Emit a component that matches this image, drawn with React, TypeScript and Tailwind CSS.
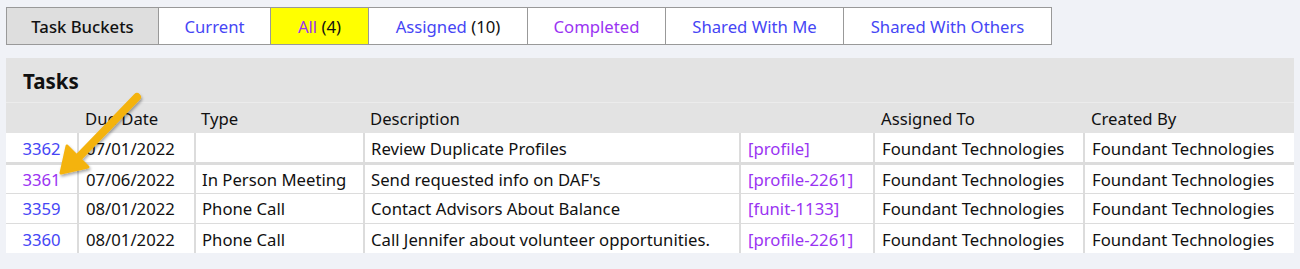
import React from "react";

const font = { fontFamily: '"Noto Sans", "Open Sans", sans-serif' };

const rows = [
  { id: "3362", idColor: "text-[#4646f5]", date: "07/01/2022", type: "", desc: "Review Duplicate Profiles", link: "[profile]" },
  { id: "3361", idColor: "text-[#9a34f2]", date: "07/06/2022", type: "In Person Meeting", desc: "Send requested info on DAF's", link: "[profile-2261]" },
  { id: "3359", idColor: "text-[#4646f5]", date: "08/01/2022", type: "Phone Call", desc: "Contact Advisors About Balance", link: "[funit-1133]" },
  { id: "3360", idColor: "text-[#4646f5]", date: "08/01/2022", type: "Phone Call", desc: "Call Jennifer about volunteer opportunities.", link: "[profile-2261]" },
];

export default function App() {
  return (
    <div className="w-[1300px] h-[269px] bg-[#f0f2f7] relative text-[16.7px] text-[#111]" style={font}>
      <div className="pt-[7px] pl-[6px]">
        <div className="flex h-[38px] w-[1046px] border border-[#999] bg-white">
          <div className="w-[152px] flex items-center justify-center pt-[2px] bg-[#dedede] border-r border-[#999] font-medium text-[#111]">Task Buckets</div>
          <div className="w-[112px] flex items-center justify-center pt-[2px] border-r border-[#999] text-[#4646f5]">Current</div>
          <div className="w-[98px] flex items-center justify-center pt-[2px] border-r border-[#999] bg-[#ffff00]"><span className="text-[#9a34f2]">All</span>&nbsp;(4)</div>
          <div className="w-[159px] flex items-center justify-center pt-[2px] border-r border-[#999]"><span className="text-[#4646f5]">Assigned</span>&nbsp;(10)</div>
          <div className="w-[138px] flex items-center justify-center pt-[2px] border-r border-[#999] text-[#9a34f2]">Completed</div>
          <div className="w-[178px] flex items-center justify-center pt-[2px] border-r border-[#999] text-[#4646f5]">Shared With Me</div>
          <div className="flex-1 flex items-center justify-center pt-[2px] text-[#4646f5]">Shared With Others</div>
        </div>
      </div>
      <div className="ml-[6px] mt-[13px] w-[1288px] bg-[#e3e3e3]">
        <div className="h-[45px] flex items-center pl-[17px] pt-[3px] text-[20.5px] font-bold text-[#111] border-b border-[#ececec]">Tasks</div>
        <table className="w-full border-collapse table-fixed">
          <colgroup>
            <col className="w-[72px]" />
            <col className="w-[117px]" />
            <col className="w-[169px]" />
            <col className="w-[376px]" />
            <col className="w-[134px]" />
            <col className="w-[210px]" />
            <col className="w-[210px]" />
          </colgroup>
          <thead>
            <tr className="h-[30px] text-left">
              <th className="font-normal"></th>
              <th className="font-normal pl-[7px] pt-[2px]">Due Date</th>
              <th className="font-normal pl-[6px] pt-[2px]">Type</th>
              <th className="font-normal pl-[6px] pt-[2px]" colSpan={2}>Description</th>
              <th className="font-normal pl-[7px] pt-[2px]">Assigned To</th>
              <th className="font-normal pl-[7px] pt-[2px]">Created By</th>
            </tr>
          </thead>
          <tbody className="bg-white">
            {rows.map((r, i) => (
              <tr key={r.id} className={`h-[30px] ${i === 0 ? "border-b-[3px] border-[#dcdcdc]" : i < 3 ? "border-b border-[#dcdcdc]" : ""}`}>
                <td className={`text-center pt-[2px] ${r.idColor} border-r-2 border-[#dcdcdc]`}>{r.id}</td>
                <td className="pl-[7px] pt-[2px] border-r-2 border-[#dcdcdc]">{r.date}</td>
                <td className="pl-[6px] pt-[2px] border-r-2 border-[#dcdcdc]">{r.type}</td>
                <td className="pl-[6px] pt-[2px] border-r-2 border-[#dcdcdc] whitespace-nowrap">{r.desc}</td>
                <td className="pl-[7px] pt-[2px] border-r-2 border-[#dcdcdc] text-[#9a34f2]">{r.link}</td>
                <td className="pl-[7px] pt-[2px] border-r-2 border-[#dcdcdc] whitespace-nowrap">Foundant Technologies</td>
                <td className="pl-[7px] pt-[2px] whitespace-nowrap">Foundant Technologies</td>
              </tr>
            ))}
          </tbody>
        </table>
        <div className="h-[2px] bg-[#f0f2f7]"></div>
      </div>
      <svg className="absolute left-[50px] top-[88px]" width="100" height="95" viewBox="0 0 100 95">
        <defs>
          <filter id="sh" x="-20%" y="-20%" width="140%" height="140%">
            <feDropShadow dx="1" dy="2" stdDeviation="1.5" floodColor="#000" floodOpacity="0.35" />
          </filter>
        </defs>
        <g filter="url(#sh)">
          <line x1="87" y1="9" x2="26" y2="72" stroke="#f4b30e" strokeWidth="8" strokeLinecap="round" />
          <polygon points="11,85 17,58 38,79" fill="#f4b30e" stroke="#f4b30e" strokeWidth="3" strokeLinejoin="round" />
        </g>
      </svg>
    </div>
  );
}
